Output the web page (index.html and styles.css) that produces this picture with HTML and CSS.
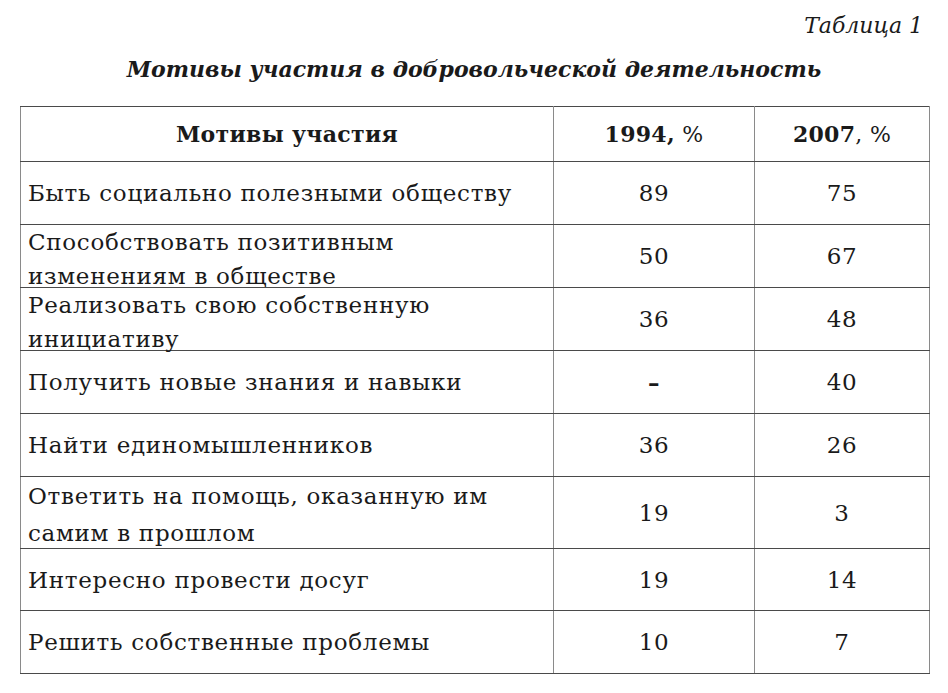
FILE: index.html
```html
<!DOCTYPE html>
<html lang="ru">
<head>
<meta charset="utf-8">
<title>Таблица 1</title>
<link rel="stylesheet" href="styles.css">
</head>
<body>
<div class="page">
  <p class="label">Таблица 1</p>
  <h1 class="caption">Мотивы участия в добровольческой деятельность</h1>
  <table class="data">
    <colgroup>
      <col class="c-motive">
      <col class="c-y1">
      <col class="c-y2">
    </colgroup>
    <thead>
      <tr class="head-row">
        <th><b>Мотивы участия</b></th>
        <th><b>1994,</b> %</th>
        <th><b>2007</b>, %</th>
      </tr>
    </thead>
    <tbody>
      <tr class="row"><td class="motive">Быть социально полезными обществу</td><td>89</td><td>75</td></tr>
      <tr class="row"><td class="motive"><div class="lines">Способствовать позитивным<br>изменениям в обществе</div></td><td>50</td><td>67</td></tr>
      <tr class="row"><td class="motive"><div class="lines">Реализовать свою собственную<br>инициативу</div></td><td>36</td><td>48</td></tr>
      <tr class="row"><td class="motive">Получить новые знания и навыки</td><td><span class="dash">–</span></td><td>40</td></tr>
      <tr class="row"><td class="motive">Найти единомышленников</td><td>36</td><td>26</td></tr>
      <tr class="row tall"><td class="motive"><div class="lines wide">Ответить на помощь, оказанную им<br>самим в прошлом</div></td><td>19</td><td>3</td></tr>
      <tr class="row short"><td class="motive">Интересно провести досуг</td><td>19</td><td>14</td></tr>
      <tr class="row"><td class="motive">Решить собственные проблемы</td><td>10</td><td>7</td></tr>
    </tbody>
  </table>
</div>
</body>
</html>
```

FILE: styles.css
```css
html, body {
  margin: 0;
  padding: 0;
  background: #ffffff;
}

.page {
  width: 908px;
  padding: 0 20px;
  color: #1a1a1a;
  font-family: "DejaVu Serif", "Liberation Serif", serif;
}

.label {
  margin: 0;
  padding: 13px 5px 0 0;
  height: 29px;
  text-align: right;
  font-family: "DejaVu Serif", serif;
  font-style: italic;
  font-size: 22px;
  line-height: 26px;
}

.caption {
  margin: 0;
  padding: 14px 0 0 0;
  height: 50px;
  text-align: center;
  font-family: "DejaVu Serif", serif;
  font-style: italic;
  font-weight: bold;
  font-size: 22px;
  line-height: 26px;
}

.data {
  width: 909px;
  border-collapse: collapse;
  table-layout: fixed;
  font-size: 23px;
  letter-spacing: 0.7px;
}

.c-motive { width: 533px; }
.c-y1 { width: 201px; }
.c-y2 { width: 175px; }

.data th,
.data td {
  border-top: 1px solid #4a4a4a;
  border-bottom: 1px solid #4a4a4a;
  border-left: 1px solid #8a8a8a;
  border-right: 1px solid #8a8a8a;
  padding: 0;
  text-align: center;
  vertical-align: middle;
}

.head-row {
  height: 55px;
}

.data th {
  font-weight: normal;
  font-size: 22px;
  letter-spacing: 0.3px;
}

.data th b {
  font-weight: bold;
}

.row {
  height: 63px;
}

.row.tall {
  height: 72px;
}

.row.short {
  height: 62px;
}

.data td.motive {
  text-align: left;
  padding-left: 7px;
  line-height: 34px;
}

.lines {
  line-height: 34px;
  margin: -1px 0 -7px;
}

.lines.wide {
  line-height: 37px;
  margin: -1px 0 -5px;
}

.dash {
  font-weight: bold;
}
```
